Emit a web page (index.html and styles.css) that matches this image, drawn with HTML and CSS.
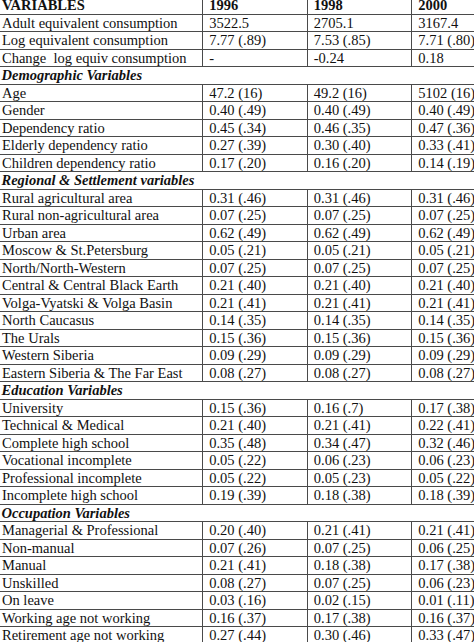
FILE: index.html
```html
<!DOCTYPE html>
<html>
<head>
<meta charset="utf-8">
<link rel="stylesheet" href="styles.css">
</head>
<body>
<table class="stats">
<colgroup><col class="c-var"><col class="c-yr"><col class="c-yr"><col class="c-yr"></colgroup>
<tr class="head"><td>VARIABLES</td><td>1996</td><td>1998</td><td>2000</td></tr>
<tr><td>Adult equivalent consumption</td><td>3522.5</td><td>2705.1</td><td>3167.4</td></tr>
<tr><td>Log equivalent consumption</td><td>7.77 (.89)</td><td>7.53 (.85)</td><td>7.71 (.80)</td></tr>
<tr><td>Change&nbsp; log equiv consumption</td><td>-</td><td>-0.24</td><td>0.18</td></tr>
<tr class="section"><td colspan="4">Demographic Variables</td></tr>
<tr><td>Age</td><td>47.2 (16)</td><td>49.2 (16)</td><td>5102 (16)</td></tr>
<tr><td>Gender</td><td>0.40 (.49)</td><td>0.40 (.49)</td><td>0.40 (.49)</td></tr>
<tr><td>Dependency ratio</td><td>0.45 (.34)</td><td>0.46 (.35)</td><td>0.47 (.36)</td></tr>
<tr><td>Elderly dependency ratio</td><td>0.27 (.39)</td><td>0.30 (.40)</td><td>0.33 (.41)</td></tr>
<tr><td>Children dependency ratio</td><td>0.17 (.20)</td><td>0.16 (.20)</td><td>0.14 (.19)</td></tr>
<tr class="section"><td colspan="4">Regional &amp; Settlement variables</td></tr>
<tr><td>Rural agricultural area</td><td>0.31 (.46)</td><td>0.31 (.46)</td><td>0.31 (.46)</td></tr>
<tr><td>Rural non-agricultural area</td><td>0.07 (.25)</td><td>0.07 (.25)</td><td>0.07 (.25)</td></tr>
<tr><td>Urban area</td><td>0.62 (.49)</td><td>0.62 (.49)</td><td>0.62 (.49)</td></tr>
<tr><td>Moscow &amp; St.Petersburg</td><td>0.05 (.21)</td><td>0.05 (.21)</td><td>0.05 (.21)</td></tr>
<tr><td>North/North-Western</td><td>0.07 (.25)</td><td>0.07 (.25)</td><td>0.07 (.25)</td></tr>
<tr><td>Central &amp; Central Black Earth</td><td>0.21 (.40)</td><td>0.21 (.40)</td><td>0.21 (.40)</td></tr>
<tr><td>Volga-Vyatski &amp; Volga Basin</td><td>0.21 (.41)</td><td>0.21 (.41)</td><td>0.21 (.41)</td></tr>
<tr><td>North Caucasus</td><td>0.14 (.35)</td><td>0.14 (.35)</td><td>0.14 (.35)</td></tr>
<tr><td>The Urals</td><td>0.15 (.36)</td><td>0.15 (.36)</td><td>0.15 (.36)</td></tr>
<tr><td>Western Siberia</td><td>0.09 (.29)</td><td>0.09 (.29)</td><td>0.09 (.29)</td></tr>
<tr><td>Eastern Siberia &amp; The Far East</td><td>0.08 (.27)</td><td>0.08 (.27)</td><td>0.08 (.27)</td></tr>
<tr class="section"><td colspan="4">Education Variables</td></tr>
<tr><td>University</td><td>0.15 (.36)</td><td>0.16 (.7)</td><td>0.17 (.38)</td></tr>
<tr><td>Technical &amp; Medical</td><td>0.21 (.40)</td><td>0.21 (.41)</td><td>0.22 (.41)</td></tr>
<tr><td>Complete high school</td><td>0.35 (.48)</td><td>0.34 (.47)</td><td>0.32 (.46)</td></tr>
<tr><td>Vocational incomplete</td><td>0.05 (.22)</td><td>0.06 (.23)</td><td>0.06 (.23)</td></tr>
<tr><td>Professional incomplete</td><td>0.05 (.22)</td><td>0.05 (.23)</td><td>0.05 (.22)</td></tr>
<tr><td>Incomplete high school</td><td>0.19 (.39)</td><td>0.18 (.38)</td><td>0.18 (.39)</td></tr>
<tr class="section"><td colspan="4">Occupation Variables</td></tr>
<tr><td>Managerial &amp; Professional</td><td>0.20 (.40)</td><td>0.21 (.41)</td><td>0.21 (.41)</td></tr>
<tr><td>Non-manual</td><td>0.07 (.26)</td><td>0.07 (.25)</td><td>0.06 (.25)</td></tr>
<tr><td>Manual</td><td>0.21 (.41)</td><td>0.18 (.38)</td><td>0.17 (.38)</td></tr>
<tr><td>Unskilled</td><td>0.08 (.27)</td><td>0.07 (.25)</td><td>0.06 (.23)</td></tr>
<tr><td>On leave</td><td>0.03 (.16)</td><td>0.02 (.15)</td><td>0.01 (.11)</td></tr>
<tr><td>Working age not working</td><td>0.16 (.37)</td><td>0.17 (.38)</td><td>0.16 (.37)</td></tr>
<tr><td>Retirement age not working</td><td>0.27 (.44)</td><td>0.30 (.46)</td><td>0.33 (.47)</td></tr>
</table>
</body>
</html>
```
FILE: styles.css
```css
html, body {
  margin: 0;
  padding: 0;
  background: #ffffff;
  overflow: hidden;
}
body {
  font-family: "Liberation Serif", "Times New Roman", serif;
  font-size: 14.5px;
  color: #111111;
}
.stats {
  border-collapse: collapse;
  table-layout: fixed;
  width: 520px;
  margin-top: -4px;
  margin-left: -3px;
}
.c-var { width: 204px; }
.c-yr { width: 104px; }
.stats td {
  border: 1px solid #4a4a4a;
  padding: 0 4px 0 4px;
  height: 16.5px;
  line-height: 16px;
  white-space: nowrap;
  overflow: hidden;
  vertical-align: middle;
}
.stats td:first-child {
  padding-left: 4px;
}
.stats td + td {
  padding-left: 6px;
}
.head td {
  font-weight: bold;
}
.section td {
  font-weight: bold;
  font-style: italic;
  border-left: none;
  border-right: none;
}
```
